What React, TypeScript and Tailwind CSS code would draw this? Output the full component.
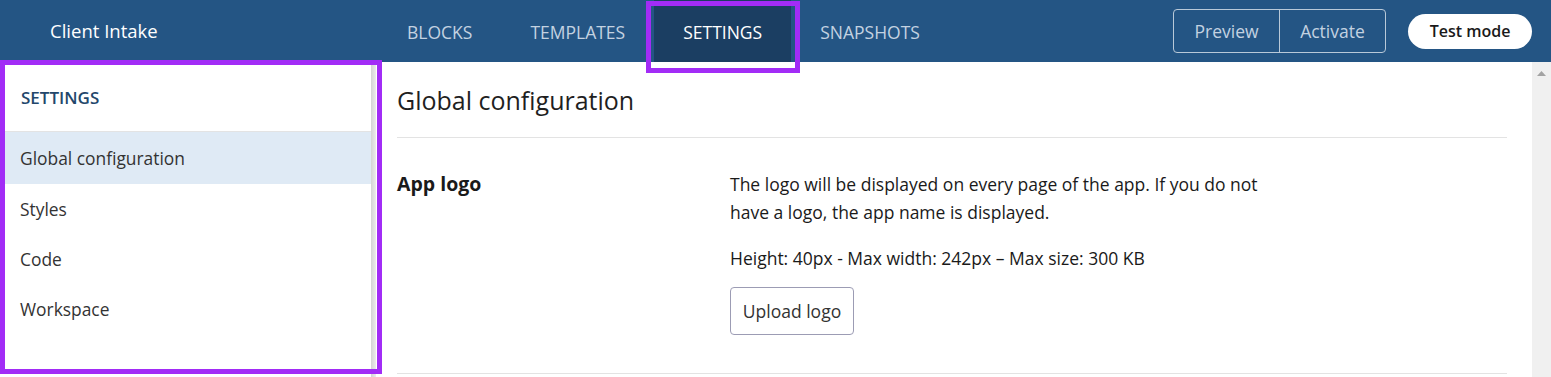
import { useState } from "react"

const tabs = ["BLOCKS", "TEMPLATES", "SETTINGS", "SNAPSHOTS"]
const sideLinks = ["Global configuration", "Styles", "Code", "Workspace"]

export default function App() {
  const [active] = useState("SETTINGS")

  return (
    <div className="relative h-[377px] w-[1551px] overflow-hidden bg-white font-['Open_Sans',sans-serif]">
      {/* top bar */}
      <header className="flex h-[62px] items-center bg-[#245584]">
        <div className="w-[378px] pl-[50px] text-[18.5px] text-white">Client Intake</div>
        <nav className="flex h-full">
          {tabs.map((tab) => (
            <div
              key={tab}
              className={`flex h-full items-center px-[29px] pt-[2px] text-[17.5px] ${
                tab === active ? "bg-[#1b3e62] text-white" : "text-[#c3d2e1]"
              }`}
            >
              {tab}
            </div>
          ))}
        </nav>
        <div className="ml-auto flex items-center">
          <div className="flex h-[44px] rounded-[4px] border border-[#b9c9d8] text-[17.5px] text-[#c3d2e1]">
            <button className="w-[106px] border-r border-[#b9c9d8]">Preview</button>
            <button className="w-[105px]">Activate</button>
          </div>
          <button className="ml-[22px] mr-[19px] h-[35px] w-[124px] rounded-full bg-white text-[16px] font-semibold text-[#1a1a1a]">
            Test mode
          </button>
        </div>
      </header>

      <div className="flex h-[315px]">
        {/* sidebar */}
        <aside className="flex w-[376px]">
          <div className="w-[371px]">
            <div className="flex h-[70px] items-center border-b border-[#e3e3e3] pl-[21px] pt-[2px] text-[17px] font-semibold text-[#23476b]">
              SETTINGS
            </div>
            {sideLinks.map((l, i) => (
              <div
                key={l}
                className={`flex items-center pl-[20px] text-[17.4px] text-[#333] ${
                  i === 0 ? "h-[52px] bg-[#dfeaf5]" : "h-[50px]"
                }`}
              >
                {l}
              </div>
            ))}
          </div>
          <div className="w-[5px] bg-gradient-to-r from-[#d4d4d4] to-[#ececec]" />
        </aside>

        {/* main */}
        <main className="flex-1 pl-[21px] pr-[25px]">
          <h1 className="border-b border-[#e3e3e3] pb-[21px] pt-[22px] text-[25px] leading-[32px] text-[#1f1f1f]">
            Global configuration
          </h1>
          <div className="flex border-b border-[#e3e3e3] pb-[38px] pt-[32px]">
            <div className="w-[333px] text-[19.5px] font-bold leading-[28px] text-[#1a1a1a]">App logo</div>
            <div className="max-w-[545px] text-[17.5px] leading-[28px] text-[#1a1a1a]">
              <p>
                The logo will be displayed on every page of the app. If you do not have a logo, the app name is
                displayed.
              </p>
              <p className="mt-[18px]">Height: 40px - Max width: 242px – Max size: 300 KB</p>
              <button className="mt-[15px] h-[48px] w-[124px] rounded-[4px] border border-[#9c9cb4] text-[17.5px] text-[#333]">
                Upload logo
              </button>
            </div>
          </div>
        </main>

        {/* scrollbar */}
        <div className="flex w-[19px] justify-center bg-[#f0f0f0] pt-[9px]">
          <svg width="9" height="5" viewBox="0 0 9 5">
            <polygon points="4.5,0 9,5 0,5" fill="#a3a3a3" />
          </svg>
        </div>
      </div>

      {/* annotation outlines */}
      <div className="pointer-events-none absolute left-[646px] top-[1px] h-[72px] w-[154px] border-[5px] border-[#a22cf6]" />
      <div className="pointer-events-none absolute left-0 top-[60px] h-[314px] w-[382px] border-[5px] border-[#a22cf6]" />
    </div>
  )
}
